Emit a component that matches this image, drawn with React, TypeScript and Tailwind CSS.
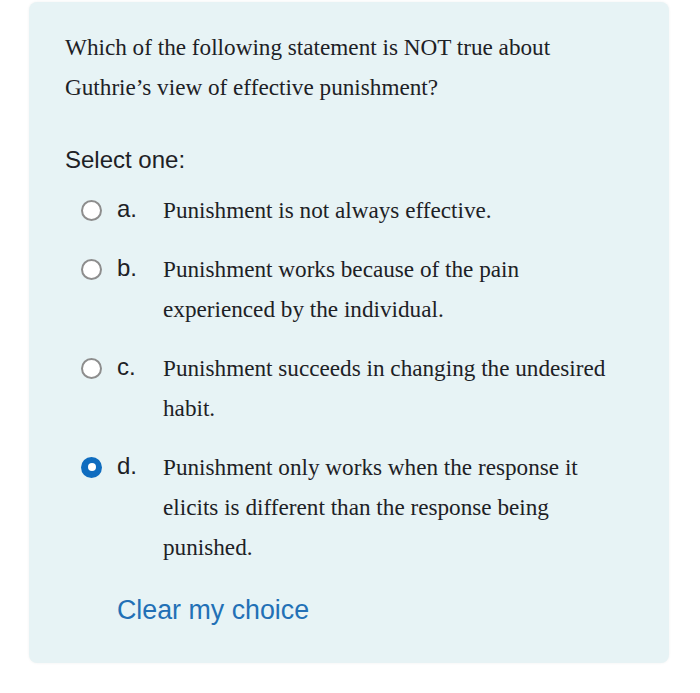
const options = [
  { letter: "a.", text: "Punishment is not always effective." },
  { letter: "b.", text: "Punishment works because of the pain experienced by the individual." },
  { letter: "c.", text: "Punishment succeeds in changing the undesired habit." },
  {
    letter: "d.",
    text: "Punishment only works when the response it elicits is different than the response being punished.",
  },
];

const selected = 3;

export default function App() {
  return (
    <div className="w-[700px] h-[693px] bg-white pt-[2px] pl-[29px]">
      <div className="w-[640px] h-[661px] bg-[#e7f3f5] rounded-lg shadow-[0_0_3px_rgba(0,0,0,0.06)] pl-[36px] pr-[36px] pt-[25px]">
        {/* QUESTION */}
        <p className="font-['Liberation_Serif',serif] text-[23.2px] leading-[40px] text-[#1d2125]">
          Which of the following statement is NOT true about Guthrie’s view of effective punishment?
        </p>

        <p className="mt-[33px] font-['Liberation_Sans',sans-serif] text-[24px] leading-[40px] text-[#1d2125]">
          Select one:
        </p>

        {/* OPTIONS */}
        <div className="mt-[10px] flex flex-col gap-[19px]">
          {options.map((o, i) => (
            <div key={o.letter} className="flex items-start">
              <div className="w-[52px] h-[40px] flex items-center pl-[16px] shrink-0">
                {i === selected ? (
                  <span className="w-[21px] h-[21px] rounded-full bg-[#0f6cbf] flex items-center justify-center">
                    <span className="w-[8px] h-[8px] rounded-full bg-white" />
                  </span>
                ) : (
                  <span className="w-[21px] h-[21px] rounded-full border-2 border-[#8d8d8d] bg-white" />
                )}
              </div>
              <span className="w-[46px] shrink-0 font-['Liberation_Sans',sans-serif] text-[24px] leading-[38px] text-[#1d2125]">
                {o.letter}
              </span>
              <span className="font-['Liberation_Serif',serif] text-[23.2px] leading-[40px] text-[#1d2125]">
                {o.text}
              </span>
            </div>
          ))}
        </div>

        {/* CLEAR */}
        <div className="mt-[23px] pl-[52px]">
          <span className="font-['Liberation_Sans',sans-serif] text-[26.8px] leading-[40px] text-[#2270b6]">
            Clear my choice
          </span>
        </div>
      </div>
    </div>
  );
}
